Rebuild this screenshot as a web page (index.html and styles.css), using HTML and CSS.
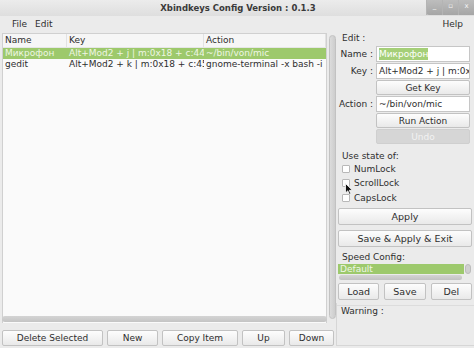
FILE: index.html
```html
<!DOCTYPE html>
<html lang="en">
<head>
  <meta charset="UTF-8">
  <title>Xbindkeys Config</title>
  <link rel="stylesheet" href="styles.css">
</head>
<body>
  <div class="window">
    <div class="titlebar">
      <span class="title">Xbindkeys Config Version : 0.1.3</span>
      <div class="wm-buttons">
        <span>_</span><span>&#9643;</span><span>x</span>
      </div>
    </div>

    <div class="menubar">
      <span class="menu-item">File</span>
      <span class="menu-item">Edit</span>
      <span class="spacer"></span>
      <span class="menu-item">Help</span>
    </div>

    <div class="main">
      <!-- Left: key list -->
      <div class="left">
        <div class="list-area">
          <div class="list">
            <div class="list-body">
              <div class="row header">
                <span class="col-name">Name</span>
                <span class="col-key">Key</span>
                <span class="col-action">Action</span>
              </div>
              <div class="row selected">
                <span class="col-name">Микрофон</span>
                <span class="col-key">Alt+Mod2 + j | m:0x18 + c:44</span>
                <span class="col-action">~/bin/von/mic</span>
              </div>
              <div class="row">
                <span class="col-name">gedit</span>
                <span class="col-key">Alt+Mod2 + k | m:0x18 + c:45</span>
                <span class="col-action">gnome-terminal -x bash -i</span>
              </div>
            </div>
            <div class="hscroll"></div>
          </div>
          <div class="vscroll"></div>
        </div>

        <div class="bottom-buttons">
          <button class="btn btn-delete">Delete Selected</button>
          <button class="btn btn-new">New</button>
          <button class="btn btn-copy">Copy Item</button>
          <button class="btn btn-up">Up</button>
          <button class="btn btn-down">Down</button>
        </div>
      </div>

      <!-- Right: edit panel -->
      <div class="right">
        <div class="section-label">Edit :</div>
        <div class="form">
          <label class="form-label">Name :</label>
          <div class="input"><span class="sel-text">Микрофон</span></div>

          <label class="form-label">Key :</label>
          <div class="input">Alt+Mod2 + j | m:0x18 + c:44</div>

          <span></span>
          <button class="btn">Get Key</button>

          <label class="form-label">Action :</label>
          <div class="input">~/bin/von/mic</div>

          <span></span>
          <button class="btn">Run Action</button>

          <span></span>
          <button class="btn disabled">Undo</button>
        </div>

        <div class="section-label state-label">Use state of:</div>
        <div class="checks">
          <div class="check"><span class="box"></span>NumLock</div>
          <div class="check"><span class="box"></span>ScrollLock<span class="cursor">
            <svg width="8" height="12" viewBox="0 0 8 12"><path d="M0.5 0.5 L0.5 10 L2.8 7.8 L4.4 11.4 L5.8 10.8 L4.3 7.3 L7.4 7.3 Z" fill="#111" stroke="#fff" stroke-width="0.8"/></svg>
          </span></div>
          <div class="check"><span class="box"></span>CapsLock</div>
        </div>

        <button class="btn wide btn-apply">Apply</button>
        <button class="btn wide btn-save-exit">Save &amp; Apply &amp; Exit</button>

        <div class="section-label speed-label">Speed Config:</div>
        <div class="speed">
          <div class="speed-list">
            <div class="speed-item">Default</div>
            <div class="speed-vscroll"></div>
          </div>
          <div class="speed-hscroll"></div>
        </div>

        <div class="speed-buttons">
          <button class="btn">Load</button>
          <button class="btn">Save</button>
          <button class="btn">Del</button>
        </div>

        <div class="warning">Warning :</div>
      </div>
    </div>
  </div>
</body>
</html>
```

FILE: styles.css
```css
/* Base */
* {
  margin: 0;
  padding: 0;
  box-sizing: border-box;
}

body {
  width: 474px;
  height: 348px;
  overflow: hidden;
  background: #ebebeb;
  font-family: 'DejaVu Sans', sans-serif;
  font-size: 9px;
  color: #2e2e2e;
}

.window {
  display: flex;
  flex-direction: column;
  height: 348px;
}

/* Title bar */
.titlebar {
  height: 16px;
  display: flex;
  align-items: center;
  justify-content: center;
  position: relative;
  background: linear-gradient(#ececec, #dedede);
}

.title {
  font-weight: bold;
  font-size: 8.5px;
  color: #3a3a3a;
  padding-left: 2px;
}

.wm-buttons {
  position: absolute;
  right: 0;
  top: 0;
  z-index: 2;
  height: 15px;
  width: 48px;
  display: flex;
  background: linear-gradient(#bdbdbd, #a6a6a6);
  border-radius: 0 0 0 3px;
}

.wm-buttons span {
  flex: 1;
  text-align: center;
  font-size: 7px;
  line-height: 13px;
  color: #f4f4f4;
  border-left: 1px solid #b4b4b4;
}

/* Menu bar */
.menubar {
  height: 16px;
  display: flex;
  align-items: center;
  padding: 0 7px 0 8px;
}

.menu-item {
  padding: 0 4px;
}

.spacer {
  flex: 1;
}

/* Main area */
.main {
  flex: 1;
  display: flex;
}

.left {
  width: 336px;
  display: flex;
  flex-direction: column;
  padding: 1px 0 1px 2px;
}

.list-area {
  flex: 1;
  display: flex;
  gap: 2px;
}

.list {
  flex: 1;
  display: flex;
  flex-direction: column;
  background: #fafafa;
  border: 1px solid #d0d0d0;
  border-bottom: none;
}

.list-body {
  flex: 1;
}

.row {
  display: flex;
  height: 11px;
  line-height: 11px;
  white-space: nowrap;
  overflow: hidden;
}

.row.header {
  height: 14px;
  line-height: 13px;
  background: #f6f6f6;
  border-bottom: 1px solid #e6e6e6;
}

.row.header span {
  border-right: 1px solid #e2e2e2;
}

.row.selected {
  background: #9dc96c;
  color: #eef6e4;
}

.row span {
  overflow: hidden;
  padding-left: 2px;
}

.col-name {
  width: 64px;
}

.col-key {
  width: 137px;
}

.col-action {
  flex: 1;
}

.hscroll {
  height: 6px;
  margin: 0 -1px 1px;
  background: linear-gradient(#d4d4d4, #c4c4c4);
  border-radius: 3px;
}

.vscroll {
  width: 7px;
  margin: 2px 0 4px;
  background: linear-gradient(90deg, #dcdcdc, #cdcdcd);
  border: 1px solid #c2c2c2;
  border-radius: 4px;
}

.bottom-buttons {
  display: flex;
  gap: 4px;
  margin-top: 7px;
  height: 17px;
}

/* Buttons */
.btn {
  font-family: 'DejaVu Sans', sans-serif;
  font-size: 9px;
  color: #2e2e2e;
  background: linear-gradient(#fdfdfd, #e9e9e9);
  border: 1px solid #c2c2c2;
  border-radius: 2px;
  height: 16px;
}

.btn.disabled {
  color: #f2f2f2;
  background: #d6d6d6;
  border-color: #cfcfcf;
}

.btn-delete { width: 101px; }
.btn-new { width: 51px; }
.btn-copy { width: 76px; }
.btn-up { width: 43px; }
.btn-down { width: 45px; }

/* Right panel */
.right {
  flex: 1;
  display: flex;
  flex-direction: column;
  padding: 1px 2px 2px 2px;
}

.section-label {
  padding-left: 4px;
  height: 11px;
  line-height: 11px;
}

.form {
  display: grid;
  grid-template-columns: 37px 1fr;
  column-gap: 1px;
  row-gap: 1px;
  margin-top: 2px;
  padding-right: 2px;
}

.form-label {
  text-align: right;
  line-height: 16px;
  padding-right: 2px;
}

.input {
  height: 16px;
  line-height: 14px;
  background: #fff;
  border: 1px solid #c6c6c6;
  padding-left: 2px;
  white-space: nowrap;
  overflow: hidden;
}

.sel-text {
  background: #a5cf78;
  color: #fff;
  padding: 1px 0;
}

.form .btn {
  height: 15px;
}

.state-label {
  margin-top: 7px;
}

.checks {
  display: flex;
  flex-direction: column;
  gap: 3.5px;
  padding-left: 4px;
  margin-top: 1px;
}

.check {
  display: flex;
  align-items: center;
  gap: 4px;
  height: 11px;
  position: relative;
}

.box {
  width: 8px;
  height: 8px;
  background: #fff;
  border: 1px solid #b8b8b8;
  border-radius: 1px;
}

.cursor {
  position: absolute;
  left: 3px;
  top: 5px;
  line-height: 0;
}

.btn.wide {
  width: 134px;
  height: 17px;
  font-size: 9.5px;
}

.btn-apply {
  margin-top: 5px;
}

.btn-save-exit {
  margin-top: 5px;
}

.speed-label {
  margin-top: 5px;
}

.speed {
  display: flex;
  flex-direction: column;
  padding-left: 0;
  margin-top: 1px;
}

.speed-list {
  display: flex;
  gap: 1px;
}

.speed-item {
  width: 126px;
  height: 10px;
  line-height: 10px;
  background: #9dc96c;
  color: #eef6e4;
  padding-left: 2px;
}

.speed-vscroll {
  width: 6px;
  height: 10px;
  background: #d0d0d0;
  border: 1px solid #bcbcbc;
  border-radius: 3px;
}

.speed-hscroll {
  width: 123px;
  height: 5px;
  margin-top: 1px;
  margin-left: 1px;
  background: linear-gradient(#d4d4d4, #c2c2c2);
  border-radius: 3px;
}

.speed-buttons {
  display: flex;
  gap: 5px;
  margin-top: 3px;
}

.speed-buttons .btn {
  flex: 1;
  height: 17px;
  font-size: 9.5px;
}

.warning {
  flex: 1;
  margin: 3px -2px 0 -2px;
  padding: 3px 0 0 4px;
  border-left: 1px solid #d6d6d6;
  border-bottom: 1px solid #d6d6d6;
  background-image: linear-gradient(#dcdcdc, #dcdcdc);
  background-size: 100% 1px;
  background-repeat: no-repeat;
  background-position: 0 2px;
}
```
